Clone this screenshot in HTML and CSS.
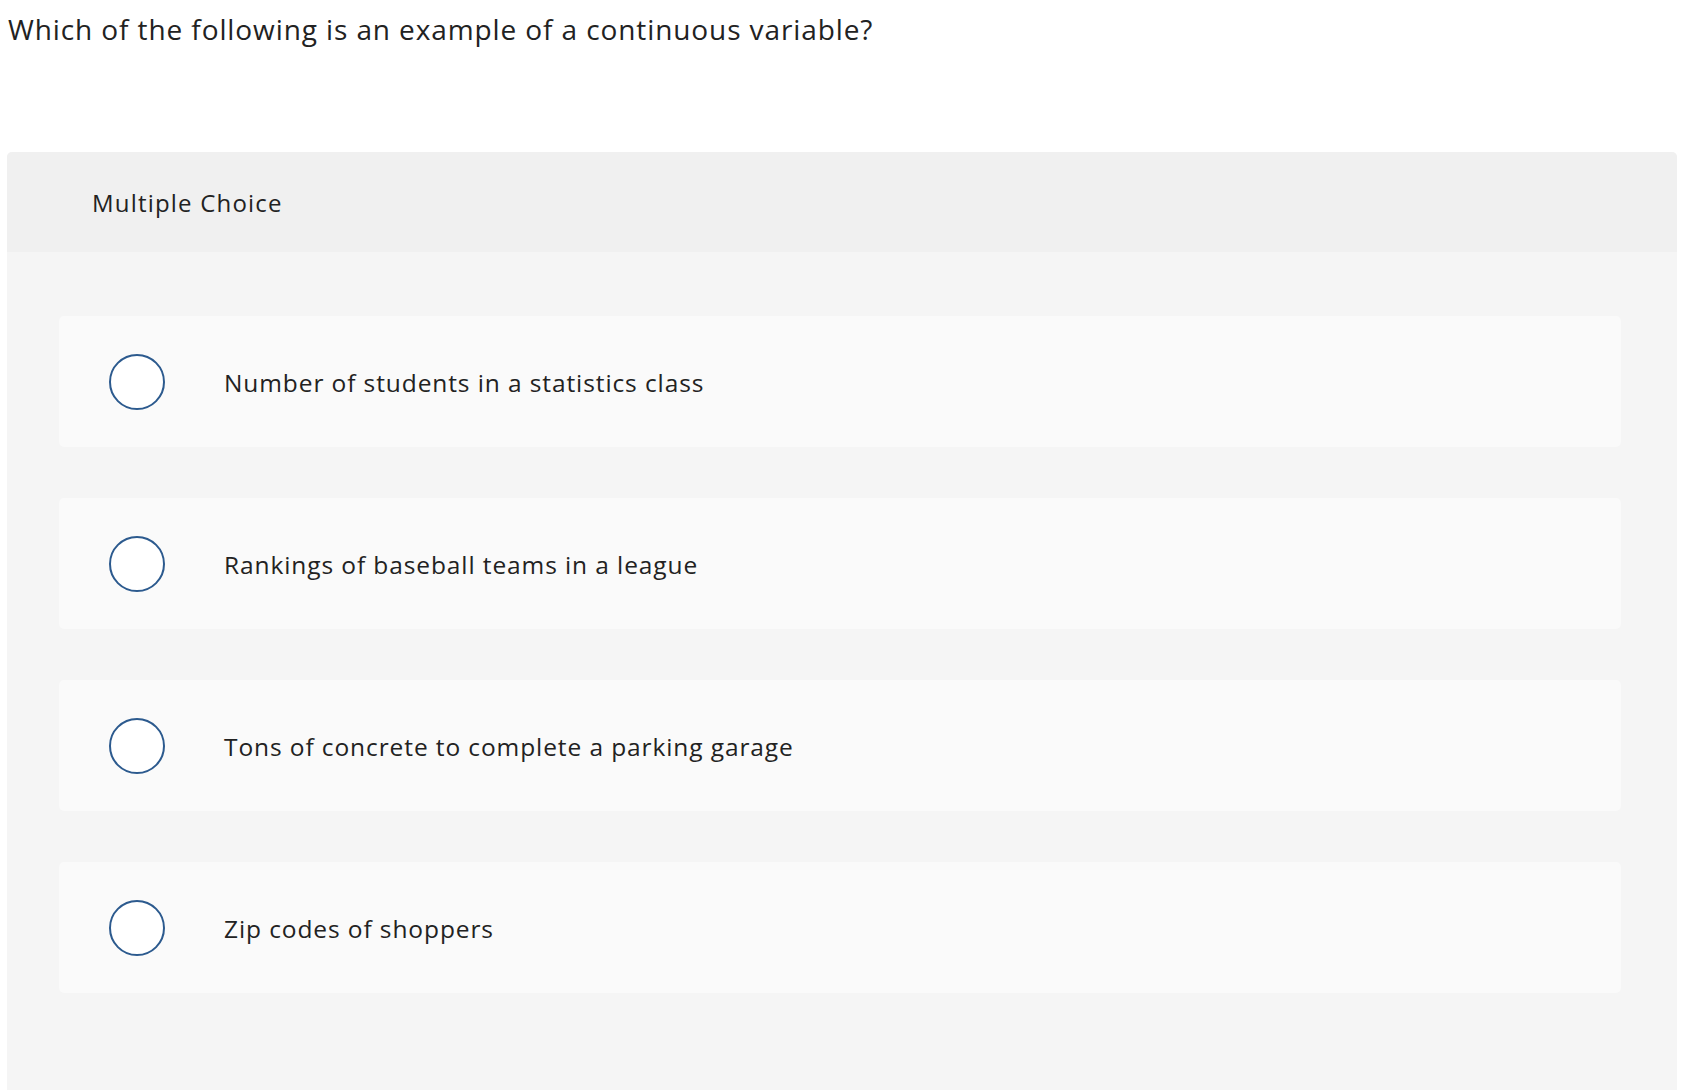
FILE: index.html
```html
<html>
<head>
    <title>Multiple Choice</title>
    <link rel="stylesheet" href="styles.css">
</head>
<body>
    <p class="question">Which of the following is an example of a continuous variable?</p>

    <div class="choice-card">
        <div class="choice-header">Multiple Choice</div>
        <div class="choice-list">
            <label class="choice">
                <span class="radio"></span>
                <span class="choice-text">Number of students in a statistics class</span>
            </label>
            <label class="choice">
                <span class="radio"></span>
                <span class="choice-text">Rankings of baseball teams in a league</span>
            </label>
            <label class="choice">
                <span class="radio"></span>
                <span class="choice-text">Tons of concrete to complete a parking garage</span>
            </label>
            <label class="choice">
                <span class="radio"></span>
                <span class="choice-text">Zip codes of shoppers</span>
            </label>
        </div>
    </div>
</body>
</html>
```

FILE: styles.css
```css
body {
    margin: 0;
    padding: 0 22px 0 7px;
    background-color: white;
    font-family: "Open Sans", Lato, sans-serif;
    color: #222222;
}

.question {
    margin: 0 0 106px 0;
    padding: 13px 0 0 1px;
    font-size: 28px;
    line-height: 33px;
    letter-spacing: 0.9px;
}

.choice-card {
    background-color: #f5f5f5;
    border-radius: 5px 5px 0 0;
    overflow: hidden;
}

.choice-header {
    background-color: #f0f0f0;
    height: 100px;
    display: flex;
    align-items: center;
    padding-left: 85px;
    font-size: 24px;
    letter-spacing: 1.2px;
}

.choice-list {
    display: flex;
    flex-direction: column;
    gap: 51px;
    padding: 64px 56px 100px 52px;
}

.choice {
    display: flex;
    align-items: center;
    height: 131px;
    padding-left: 50px;
    background-color: #fafafa;
    border-radius: 5px;
    cursor: pointer;
}

.radio {
    width: 52px;
    height: 52px;
    border: 2px solid #2c5a8e;
    border-radius: 50%;
    background-color: white;
    flex-shrink: 0;
}

.choice-text {
    margin-left: 59px;
    margin-top: 2px;
    font-size: 24.5px;
    letter-spacing: 0.9px;
}
```
